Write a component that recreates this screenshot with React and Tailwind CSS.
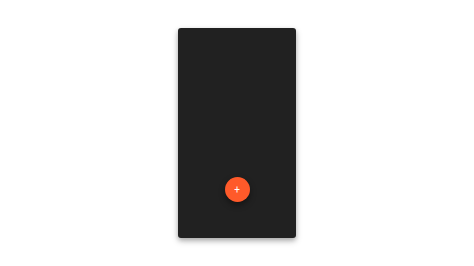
export default function App() {
  return (
    <div className="flex h-[266px] w-full items-center justify-center bg-white" style={{ fontFamily: "Roboto, 'Liberation Sans', sans-serif" }}>
      <div className="flex h-[210px] w-[118px] flex-col items-center justify-end rounded-[3px] bg-[#212121] pb-[36px] shadow-[0_3px_6px_rgba(0,0,0,0.25),0_2px_4px_rgba(0,0,0,0.15)]">
        <button className="flex h-[25px] w-[25px] items-center justify-center rounded-full bg-[#ff5a2a] text-[10px] leading-none text-white shadow-[0_3px_6px_rgba(0,0,0,0.4)]">
          +
        </button>
      </div>
    </div>
  );
}
